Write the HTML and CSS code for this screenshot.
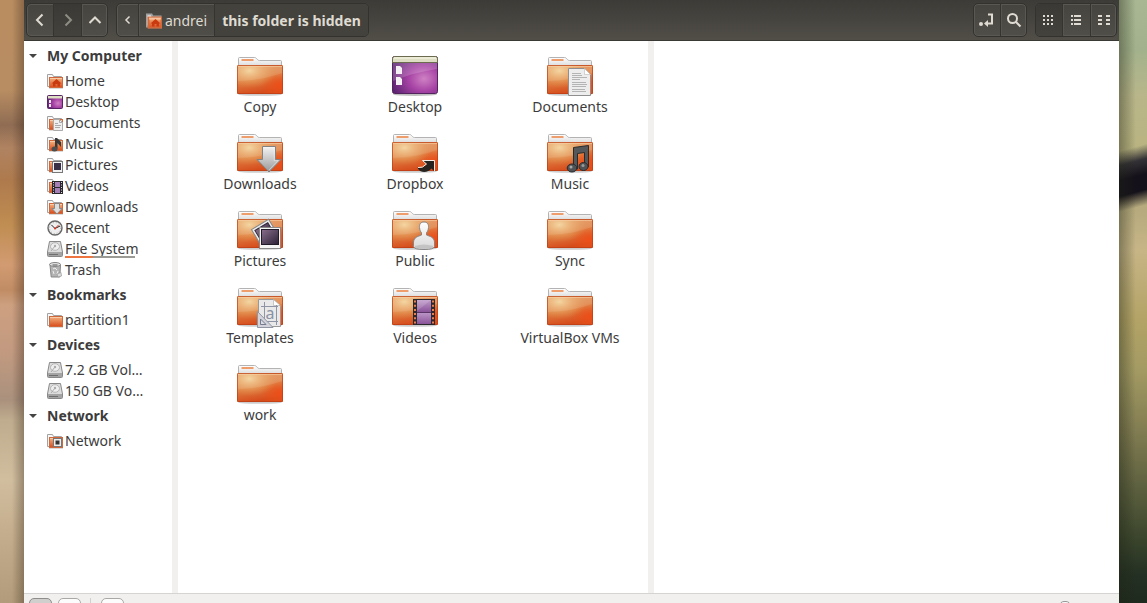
FILE: index.html
```html
<!DOCTYPE html>
<html lang="en">
<head>
<meta charset="utf-8">
<title>this folder is hidden</title>
<link rel="stylesheet" href="styles.css">
</head>
<body>
<svg class="defs" aria-hidden="true">
  <defs>
    <linearGradient id="front" x1="0" y1="0" x2=".25" y2="1">
      <stop offset="0" stop-color="#e39a62"/><stop offset=".5" stop-color="#e08448"/><stop offset="1" stop-color="#d64d1c"/>
    </linearGradient>
    <radialGradient id="glow" cx=".27" cy=".2" r=".6">
      <stop offset="0" stop-color="#f5d9a0" stop-opacity=".9"/><stop offset="1" stop-color="#e8a050" stop-opacity="0"/>
    </radialGradient>
    <radialGradient id="ember" cx=".95" cy=".7" r=".45">
      <stop offset="0" stop-color="#ee4e18"/><stop offset="1" stop-color="#ea5018" stop-opacity="0"/>
    </radialGradient>
    <linearGradient id="paper" x1="0" y1="0" x2="0" y2="1"><stop offset="0" stop-color="#fff"/><stop offset="1" stop-color="#d8d8d8"/></linearGradient>
    <linearGradient id="metal" x1="0" y1="0" x2="0" y2="1"><stop offset="0" stop-color="#f4f4f4"/><stop offset="1" stop-color="#999"/></linearGradient>
    <radialGradient id="purple" cx=".7" cy=".6" r=".75">
      <stop offset="0" stop-color="#cf82c4"/><stop offset=".45" stop-color="#a743a5"/><stop offset="1" stop-color="#5a2370"/>
    </radialGradient>
    <linearGradient id="photo" x1="0" y1="0" x2="1" y2="1"><stop offset="0" stop-color="#8a6f8c"/><stop offset="1" stop-color="#2a2035"/></linearGradient>
    <linearGradient id="film" x1="0" y1="0" x2="0" y2="1"><stop offset="0" stop-color="#bf9aca"/><stop offset="1" stop-color="#8a5399"/></linearGradient>
    <linearGradient id="sfront" x1="0" y1="0" x2="0" y2="1"><stop offset="0" stop-color="#f3b582"/><stop offset="1" stop-color="#d84c1c"/></linearGradient>
  </defs>

  <symbol id="folder" viewBox="0 0 48 44">
    <ellipse cx="24" cy="40.500" rx="22" ry="1.300" fill="#000" opacity=".2"/>
    <path d="M2.500 13V4.500Q2.500 3.500 3.500 3.500H18.500Q19.700 3.500 20.500 4.500L21.500 5.600Q22.200 6.500 23.500 6.500H44.500Q45.500 6.500 45.500 7.500V13Z" fill="url(#paper)" stroke="#b3b3b3"/>
    <path d="M5.500 6H17.500" stroke="#ee9d6c" stroke-width="2"/>
    <rect x="1" y="11" width="46" height="29" rx="1" fill="url(#front)"/>
    <rect x="1" y="11" width="46" height="29" rx="1" fill="url(#ember)"/>
    <rect x="1" y="11" width="46" height="29" rx="1" fill="url(#glow)"/>
    <path d="M2 12H46V19Q28 26 2 27Z" fill="#fff" opacity=".1"/>
    <path d="M2 12.500H46" stroke="#fbd0a5" opacity=".6"/>
    <rect x="1.500" y="11.500" width="45" height="28" rx="1" fill="none" stroke="#b93a14" opacity=".65"/>
  </symbol>
  <symbol id="desktop" viewBox="0 0 48 44">
    <ellipse cx="24" cy="40.500" rx="22" ry="1.500" opacity=".25"/>
    <rect x="1.500" y="2.500" width="45" height="37" rx="2" fill="url(#purple)" stroke="#54245f"/>
    <path d="M2 9H46V15Q24 18 2 27Z" fill="#fff" opacity=".17"/>
    <path d="M1.500 8.500V4.500Q1.500 2.500 3.500 2.500H44.500Q46.500 2.500 46.500 4.500V8.500Z" fill="#dedec4" stroke="#6b6b50"/>
    <path d="M3 4H45" stroke="#f8f8e8"/>
    <path d="M5 12h4l2 2v6H5zM5 23h4l2 2v6H5z" fill="#f4f0f4"/>
  </symbol>
  <symbol id="documents" viewBox="0 0 48 44">
    <use href="#folder"/>
    <path d="M22.500 14.500H38.500L44.500 20.500V41.500H22.500Z" fill="#ededed" stroke="#8f8f8f"/>
    <path d="M38.500 14.500V20.500H44.500Z" fill="#fff" stroke="#bbb" stroke-width=".6"/>
    <path d="M26 19.500h9M26 21.500h10M26 23.500h15M26 25.500h8M26 28.500h14M26 30.500h15M26 32.500h14M26 35.500h13M26 37.500h14" stroke="#a5a5a5" stroke-width=".8"/>
  </symbol>
  <symbol id="downloads" viewBox="0 0 48 44">
    <use href="#folder"/>
    <path d="M26.500 15.500H39.500V28.500H45L33 41L21 28.500H26.500Z" fill="url(#metal)" stroke="#828282"/>
    <path d="M27.800 16.700H38.200V29.700H42L33 39" fill="none" stroke="#fff" opacity=".5" stroke-width=".8"/>
  </symbol>
  <symbol id="dropbox" viewBox="0 0 48 44">
    <use href="#folder"/>
    <path d="M31.500 29.500H43.500V40.500L40.500 37.500Q37 41.500 31.500 40.800Q27.500 40 26.500 36.500Q31.500 38 35.500 33Z" fill="#262220"/>
    <path d="M31.500 29.500H43.500V40.500M31.500 29.500L35.500 33Q31.500 37.500 27 36.500" fill="none" stroke="#f4efe8"/>
  </symbol>
  <symbol id="music" viewBox="0 0 48 44">
    <use href="#folder"/>
    <path d="M27.500 16.500L42.500 14.500V36H38.500V21.500L31.500 22.500V38H27.500Z" fill="#55585a" stroke="#292b2c"/>
    <ellipse cx="26" cy="37" rx="4.800" ry="4" fill="#505355" stroke="#292b2c"/>
    <ellipse cx="37.500" cy="35.500" rx="4.500" ry="4" fill="#505355" stroke="#292b2c"/>
    <circle cx="25" cy="36" r="1.500" fill="#a8a8a8"/><circle cx="37" cy="34.500" r="1.500" fill="#999"/>
  </symbol>
  <symbol id="pictures" viewBox="0 0 48 44">
    <use href="#folder"/>
    <g transform="rotate(-31 28 24)"><rect x="18.500" y="15.500" width="20" height="20" fill="#eee" stroke="#888"/><rect x="21" y="18" width="15" height="15" fill="url(#photo)" stroke="#33293d"/></g>
    <rect x="23.500" y="19.500" width="21" height="21" fill="#f5f5f5" stroke="#888"/>
    <rect x="25.500" y="21.500" width="17" height="15" fill="url(#photo)" stroke="#211a29"/>
  </symbol>
  <symbol id="public" viewBox="0 0 48 44">
    <use href="#folder"/>
    <path d="M33 14C29.500 14 28.200 16.500 28.500 19.500C28.700 22 29.500 23.500 30.500 24.800V27C27 28.500 23 29 22.500 34V38.500Q23 41.500 33 41.500Q43 41.500 43.500 38.500V34C43 29 39 28.500 35.500 27V24.800C36.500 23.500 37.300 22 37.500 19.500C37.800 16.500 36.500 14 33 14Z" fill="url(#paper)" stroke="#858585"/>
    <path d="M24 38Q33 35 42 38L42 39.500Q33 42 24 39.500Z" fill="#a9a9a9" opacity=".5"/>
  </symbol>
  <symbol id="videos" viewBox="0 0 48 44">
    <use href="#folder"/>
    <rect x="22" y="14" width="22" height="26" fill="#2c292c"/>
    <rect x="26" y="15" width="14" height="12" fill="url(#film)"/><rect x="26" y="27" width="14" height="12" fill="url(#film)"/>
    <path d="M26 27.500H40" stroke="#5b3468"/>
    <path d="M26 15H40L26 26Z" fill="#fff" opacity=".15"/>
    <path d="M24 15.500V39M42 15.500V39" stroke="#e38155" stroke-width="2" stroke-dasharray="2 2.200"/>
  </symbol>

  <symbol id="s-folder" viewBox="0 0 16 16">
    <path d="M.5 13.500V1.500H5.500L6.500 3.500H14.500V13.500Z" fill="#f7f7f7" stroke="#a2a2a2"/>
    <path d="M2 15.500H16" stroke="#999" opacity=".35"/>
    <rect x="2.500" y="4.500" width="13" height="10" fill="url(#sfront)" stroke="#d1683b"/><path d="M3 5.500H15" stroke="#fbd9b8" opacity=".7"/>
  </symbol>
  <symbol id="s-home" viewBox="0 0 16 16"><use href="#s-folder"/><path d="M9.500 6L4.500 10.500H6V13.500H8.500V11H10.500V13.500H13V10.500H14.500Z" fill="#c93a10"/></symbol>
  <symbol id="s-desktop" viewBox="0 0 16 16">
    <rect x=".5" y="1.500" width="15" height="13" rx="1" fill="url(#purple)" stroke="#572564"/>
    <rect x="1" y="2" width="14" height="2.500" fill="#dedec4"/><path d="M2 6h2v3H2zM2 10h2v3H2z" fill="#f3e8f3"/>
  </symbol>
  <symbol id="s-documents" viewBox="0 0 16 16"><use href="#s-folder"/><path d="M6.500 4.500H12.500L15.500 7.500V15.500H6.500Z" fill="#eee" stroke="#aaa"/><path d="M8 8.500h3M8 10.500h6M8 12.500h5M12.500 5V7.500H15" stroke="#aaa" fill="none"/></symbol>
  <symbol id="s-music" viewBox="0 0 16 16"><use href="#s-folder"/><path d="M8 2H10L14 6V11L10.500 7V12.500H8Z" fill="#353738"/><ellipse cx="7.500" cy="13" rx="3" ry="2.500" fill="#4b4d4e"/></symbol>
  <symbol id="s-pictures" viewBox="0 0 16 16"><use href="#s-folder"/><rect x="5.500" y="4.500" width="10" height="11" fill="#f2f2f2" stroke="#777"/><rect x="7" y="6" width="7" height="7" fill="#393047"/></symbol>
  <symbol id="s-videos" viewBox="0 0 16 16"><use href="#s-folder"/><rect x="5" y="3" width="11" height="13" fill="#2b282c"/><path d="M8 4h5v5H8zM8 10h5v5H8z" fill="#a57eb5"/><path d="M6.500 4V15M14.500 4V15" stroke="#ddd" stroke-dasharray="1 1.500"/></symbol>
  <symbol id="s-downloads" viewBox="0 0 16 16"><use href="#s-folder"/><path d="M7.500 4.500H12.500V9.500H15L10 15L5 9.500H7.500Z" fill="#ddd" stroke="#888"/></symbol>
  <symbol id="s-recent" viewBox="0 0 16 16"><circle cx="8" cy="8" r="7" fill="#efefef" stroke="#666" stroke-width="1.400"/><circle cx="8" cy="8" r="5.500" fill="none" stroke="#aaa" stroke-dasharray="1 1.900"/><path d="M4.500 5L8 8.500L13 6" stroke="#222" fill="none"/><path d="M8 8.500L11.500 5" stroke="#dd3520"/><circle cx="8" cy="8.500" r="1" fill="#d32"/></symbol>
  <symbol id="s-drive" viewBox="0 0 16 16"><path d="M2.500.5H13.500L15.500 11V14.500Q15.500 15.500 14.500 15.500H1.500Q.5 15.500.5 14.500V11Z" fill="#dcdcdc" stroke="#888"/><path d="M1 11H15V15H1Z" fill="#a4a4a4"/><ellipse cx="8" cy="5.500" rx="4.500" ry="3.800" fill="#eee" stroke="#b4b4b4"/><circle cx="8" cy="5" r="1.200" fill="#aaa"/><path d="M8 5L4 10" stroke="#aaa"/><path d="M2 13.500H11" stroke="#6e6e6e"/></symbol>
  <symbol id="s-trash" viewBox="0 0 16 16"><path d="M3 3L4.200 15H12.800L13.500 3Z" fill="#b4b4b4" stroke="#868686"/><ellipse cx="8" cy="2.500" rx="5.500" ry="2" fill="#e2e2e2" stroke="#868686"/><path d="M5.500 3H10.500" stroke="#555"/><path d="M6 7L8 6L10 8M6 9L7 12M10 12L11 9" stroke="#eee" fill="none"/><path d="M10 12L14 10.500L14.500 14L11 15Z" fill="#ddd" stroke="#999" stroke-width=".7"/></symbol>
  <symbol id="s-network" viewBox="0 0 16 16"><use href="#s-folder"/><rect x="6.500" y="5.500" width="8" height="8" fill="#eee" stroke="#777"/><rect x="8.500" y="7.500" width="4" height="4" fill="#333"/></symbol>
</svg>

<div class="wallpaper wallpaper-left"></div>
<div class="window">
  <header class="toolbar">
    <nav class="group" aria-label="History">
      <button class="tool w26" aria-label="Back"><svg viewBox="0 0 14 14"><path d="M9.500 1.500L4 7L9.500 12.500"/></svg></button>
      <button class="tool w28 pressed dim" aria-label="Forward"><svg viewBox="0 0 14 14"><path d="M4.500 1.500L10 7L4.500 12.500"/></svg></button>
      <button class="tool w26" aria-label="Up"><svg viewBox="0 0 14 14"><path d="M1.500 10L7 4.500L12.500 10"/></svg></button>
    </nav>
    <nav class="group path" aria-label="Location">
      <button class="tool w21" aria-label="Earlier folders"><svg class="thin" viewBox="0 0 14 14"><path d="M8.500 3.500L5 7L8.500 10.500"/></svg></button>
      <button class="tool crumb"><svg class="s-icon" viewBox="0 0 16 16"><use href="#s-home"/></svg>andrei</button>
      <button class="tool crumb current pressed">this folder is hidden</button>
    </nav>
    <div class="group push">
      <button class="tool w26" aria-label="Enter location"><svg class="wide" viewBox="0 0 16 16"><path d="M9 2.500H13V11.500H8"/><path class="solid" d="M9 8V15L5 11.500Z"/><circle class="solid" cx="2" cy="12" r="2"/></svg></button>
      <button class="tool w26" aria-label="Search"><svg class="wide" viewBox="0 0 16 16"><circle cx="6.500" cy="6.500" r="4.500"/><path d="M10 10L14.500 14.500"/></svg></button>
    </div>
    <div class="group">
      <button class="tool w26 pressed" aria-label="Icon view"><svg class="wide" viewBox="0 0 16 16"><path class="solid" d="M2 3h2v2H2zM6 3h2v2H6zM10 3h2v2h-2zM2 7h2v2H2zM6 7h2v2H6zM10 7h2v2h-2zM2 11h2v2H2zM6 11h2v2H6zM10 11h2v2h-2z"/></svg></button>
      <button class="tool w28" aria-label="List view"><svg class="wide" viewBox="0 0 16 16"><path class="solid" d="M2 3h2v2H2zM5 3h7v2H5zM2 7h2v2H2zM5 7h7v2H5zM2 11h2v2H2zM5 11h7v2H5z"/></svg></button>
      <button class="tool w26" aria-label="Compact view"><svg class="wide" viewBox="0 0 16 16"><path class="solid" d="M2 3h4v2H2zM10 3h4v2h-4zM2 7h4v2H2zM10 7h4v2h-4zM2 11h4v2H2zM10 11h4v2h-4z"/></svg></button>
    </div>
  </header>

  <div class="panes">
    <aside class="sidebar">
      <button class="section">My Computer</button>
      <ul>
        <li><a href="#"><svg class="s-icon"><use href="#s-home"/></svg><span>Home</span></a></li>
        <li><a href="#"><svg class="s-icon"><use href="#s-desktop"/></svg><span>Desktop</span></a></li>
        <li><a href="#"><svg class="s-icon"><use href="#s-documents"/></svg><span>Documents</span></a></li>
        <li><a href="#"><svg class="s-icon"><use href="#s-music"/></svg><span>Music</span></a></li>
        <li><a href="#"><svg class="s-icon"><use href="#s-pictures"/></svg><span>Pictures</span></a></li>
        <li><a href="#"><svg class="s-icon"><use href="#s-videos"/></svg><span>Videos</span></a></li>
        <li><a href="#"><svg class="s-icon"><use href="#s-downloads"/></svg><span>Downloads</span></a></li>
        <li><a href="#"><svg class="s-icon"><use href="#s-recent"/></svg><span>Recent</span></a></li>
        <li><a href="#" class="with-usage"><svg class="s-icon"><use href="#s-drive"/></svg><span>File System</span><i class="usage"></i></a></li>
        <li><a href="#"><svg class="s-icon"><use href="#s-trash"/></svg><span>Trash</span></a></li>
      </ul>
      <button class="section">Bookmarks</button>
      <ul>
        <li><a href="#"><svg class="s-icon"><use href="#s-folder"/></svg><span>partition1</span></a></li>
      </ul>
      <button class="section">Devices</button>
      <ul>
        <li><a href="#"><svg class="s-icon"><use href="#s-drive"/></svg><span>7.2 GB Vol…</span></a></li>
        <li><a href="#"><svg class="s-icon"><use href="#s-drive"/></svg><span>150 GB Vo…</span></a></li>
      </ul>
      <button class="section">Network</button>
      <ul>
        <li><a href="#"><svg class="s-icon"><use href="#s-network"/></svg><span>Network</span></a></li>
      </ul>
    </aside>
    <main class="files">
      <a href="#"><svg><use href="#folder"/></svg>Copy</a>
      <a href="#"><svg><use href="#desktop"/></svg>Desktop</a>
      <a href="#"><svg><use href="#documents"/></svg>Documents</a>
      <a href="#"><svg><use href="#downloads"/></svg>Downloads</a>
      <a href="#"><svg><use href="#dropbox"/></svg>Dropbox</a>
      <a href="#"><svg><use href="#music"/></svg>Music</a>
      <a href="#"><svg><use href="#pictures"/></svg>Pictures</a>
      <a href="#"><svg><use href="#public"/></svg>Public</a>
      <a href="#"><svg><use href="#folder"/></svg>Sync</a>
      <a href="#"><svg viewBox="0 0 48 44">
        <use href="#folder"/>
        <path d="M22.500 14.500H37.500L44.500 21.500V41.500H22.500Z" fill="#e9e9ea" stroke="#999"/>
        <path d="M37.500 14.500V20.500H44.500Z" fill="#fff" stroke="#aaa" stroke-width=".6"/>
        <path d="M25 21.500H42M28.500 17V35M40.500 20V40M27 36.500H42" stroke="#9095a5" fill="none"/>
        <text x="34" y="34" class="template-letter">a</text>
        <path d="M21.500 26.500L37 42.500H21.500Z" fill="#d1d2da" stroke="#9295a3"/><path d="M24.500 34V39.500H30Z" fill="#dcdde2" stroke="#767b90"/>
      </svg>Templates</a>
      <a href="#"><svg><use href="#videos"/></svg>Videos</a>
      <a href="#"><svg><use href="#folder"/></svg>VirtualBox VMs</a>
      <a href="#"><svg><use href="#folder"/></svg>work</a>
    </main>
    <section class="second-pane" aria-label="Second pane"></section>
  </div>

  <footer class="statusbar">
    <button class="status-button active" aria-label="Places"></button>
    <button class="status-button" aria-label="Tree"></button>
    <span class="divider"></span>
    <button class="status-button" aria-label="Hide sidebar"></button>
    <input class="zoom" type="range" aria-label="Icon size" value="50">
  </footer>
</div>
<div class="wallpaper wallpaper-right"></div>
</body>
</html>
```

FILE: styles.css
```css
* { box-sizing: border-box; }

body {
  margin: 0;
  height: 100vh;
  overflow: hidden;
  display: grid;
  grid-template-columns: 24px minmax(0, 1fr) 28px;
  font: 14px/20px "Noto Sans", "Open Sans", sans-serif;
  color: #3c3c3c;
}

.defs { position: absolute; width: 0; height: 0; }

button { font: inherit; color: inherit; border: 0; padding: 0; background: none; }
a { color: inherit; text-decoration: none; }
ul { list-style: none; margin: 0; padding: 0; }

.wallpaper-left {
  background:
    linear-gradient(90deg, transparent 50%, rgba(50, 35, 25, .35)),
    linear-gradient(#ba8d60 0, #b88d62 90px, #8f6c53 125px, #b08361 148px, #ae7a4d 180px, #c08d52 225px, #d29b72 265px, #c08c64 290px, #cda080 305px, #c39a80 350px, #aa917d 400px, #bfac8e 420px, #d1be9f 480px, #c5ae8e 530px, #b29b7a 603px);
}

.wallpaper-right {
  background:
    linear-gradient(90deg, rgba(30, 35, 20, .4), transparent 60%),
    linear-gradient(165deg, transparent 146px, rgba(38, 36, 46, .9) 160px, #15111a 175px, #15111a 190px, transparent 205px),
    linear-gradient(#a9b793 0, #a3b28c 50px, #b8b68a 95px, #b9b482 140px, #b6aa7e 210px, #c7b586 250px, #b3a366 320px, #a39a63 370px, #827d52 430px, #5b5f3e 490px, #3a442c 540px, #243023 575px, #1f2a1e 603px);
}

.window {
  min-width: 0;
  height: 100vh;
  display: flex;
  flex-direction: column;
  overflow: hidden;
  background: #fff;
}

.toolbar {
  flex: none;
  display: flex;
  align-items: center;
  gap: 8px;
  padding: 3px 2px;
  border-bottom: 1px solid #3a3935;
  background: linear-gradient(#3c3b37, #514e48);
  color: #dfdbd2;
}

.group {
  display: flex;
  height: 34px;
  border: 1px solid #33322e;
  border-radius: 5px;
  overflow: hidden;
  background: linear-gradient(#45443f, #504e48);
  box-shadow: inset 0 0 0 1px #5a5852;
}

.push { margin-left: auto; }

.tool { display: flex; align-items: center; justify-content: center; }
.tool + .tool { border-left: 1px solid #35342f; box-shadow: inset 1px 0 #57554f; }
.tool.pressed { background: linear-gradient(#3a3935, #43423d); box-shadow: none; }
.tool.current { background: #43423c; }
.w21 { width: 21px; }
.w26 { width: 26px; }
.w28 { width: 28px; }

.tool svg { width: 14px; height: 14px; fill: none; stroke: #dfdbd2; stroke-width: 2; }
.tool .wide { width: 16px; height: 16px; }
.tool .thin { stroke-width: 1.5; }
.tool .solid { fill: #dfdbd2; stroke: none; }
.tool.dim svg { stroke: #8f8c84; }

.tool.crumb { padding: 2px 7px 0; gap: 3px; }
.tool .s-icon { width: 16px; height: 16px; stroke: none; }
.tool.current { font-weight: 700; }

.panes {
  flex: 1;
  min-height: 0;
  display: grid;
  grid-template-columns: 154px minmax(0, 476fr) minmax(0, 465fr);
}

.sidebar, .files { border-right: 6px solid #f1f0ef; overflow: hidden; }

.section {
  display: flex;
  align-items: center;
  gap: 10px;
  width: 100%;
  height: 29px;
  padding-left: 5px;
  font-weight: 700;
}

.section::before {
  content: "";
  border: 4px solid transparent;
  border-top-color: #444;
  border-bottom-width: 0;
}

.sidebar a {
  display: flex;
  align-items: center;
  gap: 2px;
  height: 21px;
  padding-left: 23px;
  white-space: nowrap;
}

.s-icon { flex: none; width: 16px; height: 16px; }

.with-usage { position: relative; }
.usage {
  position: absolute;
  left: 41px;
  bottom: 1px;
  width: 70px;
  height: 2px;
  background: linear-gradient(90deg, #ee7440 40%, #9c9a94 40%);
}

.files {
  display: grid;
  grid-template-columns: repeat(auto-fill, 154px);
  align-content: start;
  gap: 15px 1px;
  padding: 13px 0 0 5px;
  line-height: 18px;
}

.files a { display: flex; flex-direction: column; align-items: center; }
.files svg { width: 48px; height: 44px; }
.template-letter { font: 16px "Noto Sans", sans-serif; text-anchor: middle; fill: #8a91a3; }

.statusbar {
  flex: none;
  display: flex;
  align-items: flex-start;
  gap: 6px;
  height: 10px;
  padding: 4px 5px 0;
  overflow: hidden;
  border-top: 1px solid #d5d4d2;
  background: #f1f0ef;
}

.status-button {
  flex: none;
  width: 23px;
  height: 24px;
  border: 1px solid #aaa8a5;
  border-radius: 5px;
  background: #fcfcfc;
}
.status-button.active { background: #d0cfcd; border-color: #8f8d8a; }
.divider { width: 1px; height: 24px; margin: 0 4px 0 3px; background: #d2d0ce; }

.zoom {
  appearance: none;
  width: 98px;
  height: 24px;
  margin: 0 0 0 auto;
  background: none;
}
.zoom::-webkit-slider-runnable-track { height: 4px; border-radius: 2px; background: #ccc; }
.zoom::-webkit-slider-thumb {
  appearance: none;
  width: 12px;
  height: 18px;
  margin-top: -7px;
  border: 1px solid #999;
  border-radius: 5px;
  background: #f8f8f8;
}
```
